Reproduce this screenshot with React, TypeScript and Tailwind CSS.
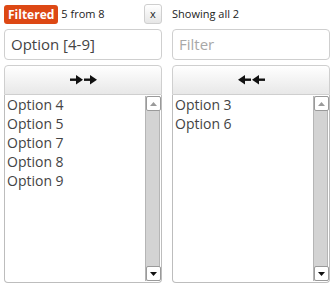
import React from "react";

const font = { fontFamily: '"Open Sans", "Liberation Sans", sans-serif' };

function Arrows({ dir }: { dir: "right" | "left" }) {
  const one = (x: number) =>
    dir === "right" ? (
      <g key={x}>
        <rect x={x} y={3.5} width={8} height={2.4} fill="#111" />
        <polygon points={`${x + 6},0 ${x + 13},4.7 ${x + 6},9.4`} fill="#111" />
      </g>
    ) : (
      <g key={x}>
        <rect x={x + 5} y={3.5} width={8} height={2.4} fill="#111" />
        <polygon points={`${x + 7},0 ${x},4.7 ${x + 7},9.4`} fill="#111" />
      </g>
    );
  return (
    <svg width="27" height="10" viewBox="0 0 27 10">
      {one(0)}
      {one(14)}
    </svg>
  );
}

function ScrollBtn({ up }: { up: boolean }) {
  return (
    <div className="w-[15px] h-[15px] bg-white border border-[#9a9a9a] rounded-[2px] flex items-center justify-center">
      <svg width="7" height="4" viewBox="0 0 7 4">
        {up ? (
          <polygon points="0,4 3.5,0 7,4" fill="#9a9a9a" />
        ) : (
          <polygon points="0,0 3.5,4 7,0" fill="#111" />
        )}
      </svg>
    </div>
  );
}

function Column({
  header,
  value,
  placeholder,
  dir,
  items,
}: {
  header: React.ReactNode;
  value: string;
  placeholder: string;
  dir: "right" | "left";
  items: string[];
}) {
  return (
    <div className="flex flex-col w-[158px]">
      <div className="h-[20px] flex items-center">{header}</div>
      <div className="mt-[5px] h-[31px] border border-[#cfcfcf] rounded-[4px] bg-white flex items-center px-[6px] text-[15px]">
        {value ? (
          <span className="text-[#444]">{value}</span>
        ) : (
          <span className="text-[#a8a8a8]">{placeholder}</span>
        )}
      </div>
      <div className="mt-[5px] h-[30px] border border-[#cfcfcf] rounded-t-[4px] bg-gradient-to-b from-white to-[#e8e8e8] flex items-center justify-center">
        <Arrows dir={dir} />
      </div>
      <div className="h-[188px] border border-t-0 border-[#bdbdbd] rounded-b-[4px] bg-white flex">
        <div className="flex-1 flex flex-col pl-[2px] text-[14px] leading-[19px] text-[#444]">
          {items.map((it) => (
            <div key={it}>{it}</div>
          ))}
        </div>
        <div className="w-[15px] mr-[1px] flex flex-col bg-[#d3d3d3] border-x border-[#b5b5b5] my-[1px]">
          <ScrollBtn up />
          <div className="flex-1" />
          <ScrollBtn up={false} />
        </div>
      </div>
    </div>
  );
}

export default function App() {
  return (
    <div className="w-[334px] h-[288px] bg-white p-[4px] flex gap-[10px]" style={font}>
      <Column
        header={
          <div className="flex items-center w-full">
            <span className="bg-[#dd4814] text-white font-bold text-[12px] leading-[19px] px-[4px] rounded-[3px]">
              Filtered
            </span>
            <span className="ml-[3px] text-[11px] text-[#222]">5 from 8</span>
            <div className="ml-auto w-[18px] h-[20px] border border-[#cfcfcf] rounded-[3px] bg-gradient-to-b from-white to-[#e6e6e6] flex items-center justify-center text-[11px] text-[#222]">
              x
            </div>
          </div>
        }
        value="Option [4-9]"
        placeholder=""
        dir="right"
        items={["Option 4", "Option 5", "Option 7", "Option 8", "Option 9"]}
      />
      <Column
        header={<span className="text-[11px] text-[#222]">Showing all 2</span>}
        value=""
        placeholder="Filter"
        dir="left"
        items={["Option 3", "Option 6"]}
      />
    </div>
  );
}
